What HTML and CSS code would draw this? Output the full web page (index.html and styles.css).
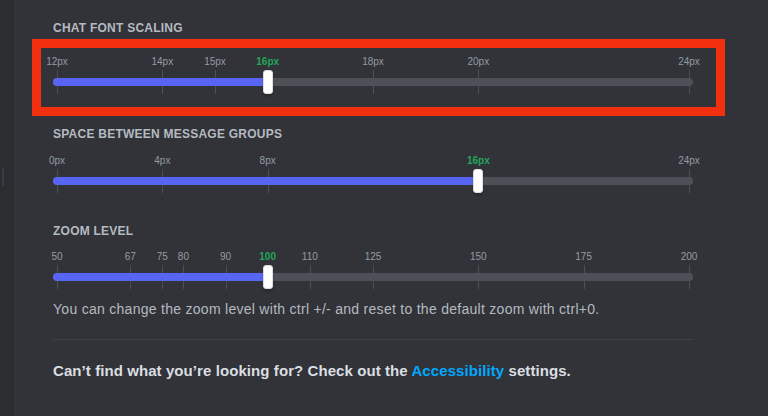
FILE: index.html
```html
<!DOCTYPE html>
<html lang="en">
<head>
<meta charset="utf-8">
<title>Appearance settings</title>
<link rel="stylesheet" href="styles.css">
</head>
<body>
<div class="layout">
  <aside class="sidebar"><span class="scroll-thumb"></span></aside>
  <main class="content">
    <section class="section section--boxed">
      <h2 class="heading">Chat Font Scaling</h2>
      <div class="slider slider--first">
        <div class="marks">
          <div class="mark" style="left:0%"><span class="mark-label">12px</span><span class="mark-line"></span></div>
          <div class="mark" style="left:16.667%"><span class="mark-label">14px</span><span class="mark-line"></span></div>
          <div class="mark" style="left:25%"><span class="mark-label">15px</span><span class="mark-line"></span></div>
          <div class="mark mark--active" style="left:33.333%"><span class="mark-label">16px</span><span class="mark-line"></span></div>
          <div class="mark" style="left:50%"><span class="mark-label">18px</span><span class="mark-line"></span></div>
          <div class="mark" style="left:66.667%"><span class="mark-label">20px</span><span class="mark-line"></span></div>
          <div class="mark" style="left:100%"><span class="mark-label">24px</span><span class="mark-line"></span></div>
        </div>
        <div class="track"><div class="fill" style="width:calc(4px + 33.333% * 632 / 640)"></div></div>
        <div class="knob-area"><span class="knob" style="left:33.333%"></span></div>
      </div>
      <div class="highlight"></div>
    </section>

    <section class="section section--second">
      <h2 class="heading">Space between message groups</h2>
      <div class="slider slider--second">
        <div class="marks">
          <div class="mark" style="left:0%"><span class="mark-label">0px</span><span class="mark-line"></span></div>
          <div class="mark" style="left:16.667%"><span class="mark-label">4px</span><span class="mark-line"></span></div>
          <div class="mark" style="left:33.333%"><span class="mark-label">8px</span><span class="mark-line"></span></div>
          <div class="mark mark--active" style="left:66.667%"><span class="mark-label">16px</span><span class="mark-line"></span></div>
          <div class="mark" style="left:100%"><span class="mark-label">24px</span><span class="mark-line"></span></div>
        </div>
        <div class="track"><div class="fill" style="width:calc(4px + 66.667% * 632 / 640)"></div></div>
        <div class="knob-area"><span class="knob" style="left:66.667%"></span></div>
      </div>
    </section>

    <section class="section section--third">
      <h2 class="heading">Zoom Level</h2>
      <div class="slider slider--third">
        <div class="marks">
          <div class="mark" style="left:0%"><span class="mark-label">50</span><span class="mark-line"></span></div>
          <div class="mark" style="left:11.6%"><span class="mark-label">67</span><span class="mark-line"></span></div>
          <div class="mark" style="left:16.667%"><span class="mark-label">75</span><span class="mark-line"></span></div>
          <div class="mark" style="left:20%"><span class="mark-label">80</span><span class="mark-line"></span></div>
          <div class="mark" style="left:26.667%"><span class="mark-label">90</span><span class="mark-line"></span></div>
          <div class="mark mark--active" style="left:33.333%"><span class="mark-label">100</span><span class="mark-line"></span></div>
          <div class="mark" style="left:40%"><span class="mark-label">110</span><span class="mark-line"></span></div>
          <div class="mark" style="left:50%"><span class="mark-label">125</span><span class="mark-line"></span></div>
          <div class="mark" style="left:66.667%"><span class="mark-label">150</span><span class="mark-line"></span></div>
          <div class="mark" style="left:83.333%"><span class="mark-label">175</span><span class="mark-line"></span></div>
          <div class="mark" style="left:100%"><span class="mark-label">200</span><span class="mark-line"></span></div>
        </div>
        <div class="track"><div class="fill" style="width:calc(4px + 33.333% * 632 / 640)"></div></div>
        <div class="knob-area"><span class="knob" style="left:33.333%"></span></div>
      </div>
      <p class="description">You can change the zoom level with ctrl +/- and reset to the default zoom with ctrl+0.</p>
    </section>

    <hr class="divider">

    <p class="footer-note">Can’t find what you’re looking for? Check out the <a class="link" href="#">Accessibility</a> settings.</p>
  </main>
</div>
</body>
</html>
```

FILE: styles.css
```css
* { box-sizing: border-box; }

html, body {
  margin: 0;
  padding: 0;
  height: 100%;
  background: #313338;
  font-family: "Liberation Sans", Arial, sans-serif;
  overflow: hidden;
}

.layout {
  display: flex;
  height: 416px;
}

.sidebar {
  position: relative;
  width: 14px;
  flex: 0 0 14px;
  background: #2b2d31;
}

.scroll-thumb {
  position: absolute;
  left: 2px;
  top: 168px;
  width: 2px;
  height: 18px;
  border-radius: 1px;
  background: #393b40;
}

.content {
  width: 640px;
  margin-left: 39px;
  padding-top: 20px;
}

.section { position: relative; }

.section--second { margin-top: 31px; }
.section--third { margin-top: 29px; }

.heading {
  margin: 0;
  font-size: 12px;
  line-height: 16px;
  font-weight: 700;
  letter-spacing: 0.02em;
  text-transform: uppercase;
  color: #b5bac1;
}

.slider {
  position: relative;
  height: 40px;
}

.slider--first { margin-top: 19px; }
.slider--second { margin-top: 12px; }
.slider--third { margin-top: 11px; }

.marks {
  position: absolute;
  left: 4px;
  right: 4px;
  top: 0;
  bottom: 0;
}

.mark {
  position: absolute;
  top: 0;
  width: 0;
  height: 40px;
}

.mark-label {
  position: absolute;
  top: 0;
  left: 0;
  transform: translateX(-50%);
  font-size: 10px;
  line-height: 13px;
  color: #949ba4;
  white-space: nowrap;
}

.mark--active .mark-label {
  color: #23a55a;
  font-weight: 700;
}

.mark-line {
  position: absolute;
  top: 15px;
  left: 0;
  width: 1px;
  height: 24px;
  background: #4e5058;
}

.track {
  position: absolute;
  left: 0;
  right: 0;
  top: 23px;
  height: 8px;
  border-radius: 4px;
  background: #4e5058;
  overflow: hidden;
}

.fill {
  height: 100%;
  background: #5865f2;
}

.knob-area {
  position: absolute;
  left: 4px;
  right: 4px;
  top: 15px;
  height: 24px;
}

.knob {
  position: absolute;
  top: 0;
  width: 10px;
  height: 24px;
  margin-left: -5px;
  border-radius: 3px;
  background: #ffffff;
  border: 1px solid #dcdde0;
  box-shadow: 0 3px 1px rgba(0, 0, 0, 0.05), 0 2px 2px rgba(0, 0, 0, 0.1);
}

.highlight {
  position: absolute;
  left: -21px;
  top: 19px;
  width: 693px;
  height: 77px;
  border: 9px solid #f2300f;
  pointer-events: none;
}

.description {
  margin: 10px 0 0;
  font-size: 14px;
  line-height: 18px;
  letter-spacing: 0.28px;
  color: #b5bac1;
}

.divider {
  margin: 21px 0 0;
  border: 0;
  height: 1px;
  background: #3f4147;
}

.footer-note {
  margin: 21px 0 0;
  font-size: 15px;
  line-height: 20px;
  font-weight: 700;
  letter-spacing: 0.08px;
  color: #dbdee1;
}

.link {
  color: #00a8fc;
  text-decoration: none;
}
```
